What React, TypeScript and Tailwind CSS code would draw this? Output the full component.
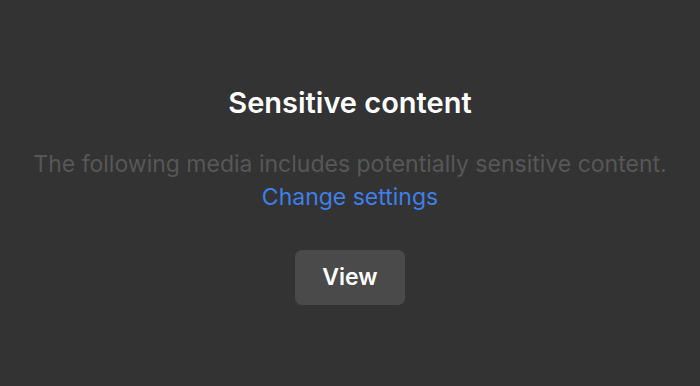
import React from 'react'

const App = () => {
  return (
    <div className="w-[700px] h-[386px] bg-[#333333] flex flex-col items-center pt-[85px] font-['Inter',sans-serif]">
      <div className="text-white text-[29px] leading-[36px] font-semibold">Sensitive content</div>
      <div className="mt-[27px] text-[#575757] text-[23px] leading-[33px] text-center whitespace-nowrap">
        The following media includes potentially sensitive content.
      </div>
      <a className="text-[#3f7fe9] text-[23px] leading-[33px]">Change settings</a>
      <button className="mt-[36px] w-[110px] h-[55px] rounded-[7px] bg-[#4a4a4a] text-white text-[23px] font-semibold">
        View
      </button>
    </div>
  )
}

export default App
